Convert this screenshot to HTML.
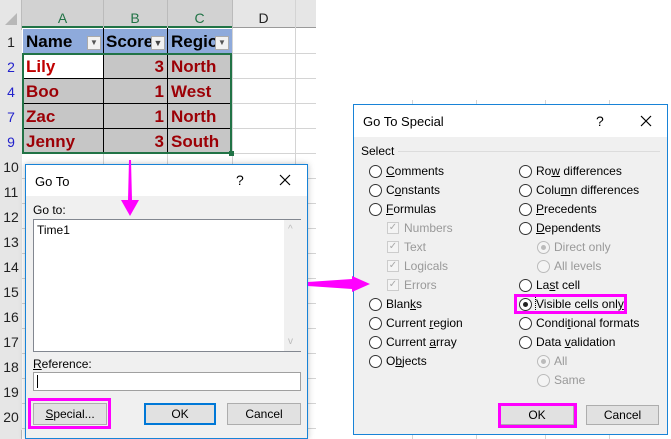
<!DOCTYPE html>
<html><head><style>
*{margin:0;padding:0;box-sizing:border-box}
body{width:671px;height:439px;position:relative;background:#fff;font-family:"Liberation Sans",sans-serif;overflow:hidden}
.a{position:absolute}
.hl{position:absolute;height:1px;background:#d4d4d4}
.vl{position:absolute;width:1px;background:#d4d4d4}
.rh{position:absolute;left:0;width:22px;text-align:center;font-size:14px;color:#222;background:#e6e6e6}
.ch{position:absolute;top:0;height:28px;line-height:36px;text-align:center;font-size:14px;color:#217346}
.cell{position:absolute;font-weight:bold;font-size:16px;line-height:25px;color:#9c0006}
.dlg{font-size:12px;color:#000}
.rad{position:absolute;width:13px;height:13px;border:1px solid #333;border-radius:50%;background:#fff}
.rad.dis{border-color:#bbb;background:#f4f4f4}
.lbl{position:absolute;font-size:12px;line-height:14px}
.chk{position:absolute;width:12px;height:12px;border:1px solid #ccc;background:#f4f4f4;color:#aaa;font-size:10px;line-height:10px;text-align:center}
.btn{position:absolute;border:1px solid #adadad;background:#e1e1e1;text-align:center;font-size:12px;line-height:20px}
u{text-decoration:underline}
</style></head><body>
<div class="a" style="left:0;top:0;width:316px;height:28px;background:#e6e6e6;border-bottom:1px solid #9a9a9a"></div>
<div class="a" style="left:0;top:0;width:22px;height:439px;background:#e6e6e6;border-right:1px solid #bcbcbc"></div>
<div class="a" style="left:22px;top:0;width:210px;height:28px;background:#d2d2d2;border-bottom:2px solid #217346"></div>
<div class="a" style="left:5px;top:13px;width:0;height:0;border-left:12px solid transparent;border-bottom:12px solid #b8b8b8"></div>
<div class="ch" style="left:22px;width:81px">A</div>
<div class="ch" style="left:103px;width:64px">B</div>
<div class="ch" style="left:167px;width:65px">C</div>
<div class="ch" style="left:232px;width:63px;color:#222">D</div>
<div class="vl" style="left:103px;top:0;height:28px;background:#bbb"></div>
<div class="vl" style="left:167px;top:0;height:28px;background:#bbb"></div>
<div class="vl" style="left:232px;top:0;height:28px;background:#bbb"></div>
<div class="vl" style="left:295px;top:0;height:439px"></div>
<div class="vl" style="left:232px;top:28px;height:411px"></div>
<div class="vl" style="left:103px;top:153px;height:286px"></div>
<div class="vl" style="left:167px;top:153px;height:286px"></div>
<div class="hl" style="left:0;top:53px;width:316px"></div>
<div class="hl" style="left:0;top:78px;width:316px"></div>
<div class="hl" style="left:0;top:103px;width:316px"></div>
<div class="hl" style="left:0;top:128px;width:316px"></div>
<div class="hl" style="left:0;top:153px;width:316px"></div>
<div class="hl" style="left:0;top:178px;width:316px"></div>
<div class="hl" style="left:0;top:203px;width:316px"></div>
<div class="hl" style="left:0;top:228px;width:316px"></div>
<div class="hl" style="left:0;top:253px;width:316px"></div>
<div class="hl" style="left:0;top:278px;width:316px"></div>
<div class="hl" style="left:0;top:303px;width:316px"></div>
<div class="hl" style="left:0;top:328px;width:316px"></div>
<div class="hl" style="left:0;top:353px;width:316px"></div>
<div class="hl" style="left:0;top:378px;width:316px"></div>
<div class="hl" style="left:0;top:403px;width:316px"></div>
<div class="hl" style="left:0;top:428px;width:316px"></div>
<div class="rh" style="top:30px;line-height:25px">1</div>
<div class="rh" style="top:55px;line-height:25px;color:#2222cc">2</div>
<div class="rh" style="top:80px;line-height:25px;color:#2222cc">4</div>
<div class="rh" style="top:105px;line-height:25px;color:#2222cc">7</div>
<div class="rh" style="top:130px;line-height:25px;color:#2222cc">9</div>
<div class="rh" style="top:155px;line-height:25px">10</div>
<div class="rh" style="top:180px;line-height:25px">11</div>
<div class="rh" style="top:205px;line-height:25px">12</div>
<div class="rh" style="top:230px;line-height:25px">13</div>
<div class="rh" style="top:255px;line-height:25px">14</div>
<div class="rh" style="top:280px;line-height:25px">15</div>
<div class="rh" style="top:305px;line-height:25px">16</div>
<div class="rh" style="top:330px;line-height:25px">17</div>
<div class="rh" style="top:355px;line-height:25px">18</div>
<div class="rh" style="top:380px;line-height:25px">19</div>
<div class="rh" style="top:405px;line-height:25px">20</div>
<div class="a" style="left:23px;top:29px;width:209px;height:24px;background:#8eaadb"></div>
<div class="a" style="left:23px;top:53px;width:209px;height:100px;background:#c6c6c6"></div>
<div class="a" style="left:23px;top:54px;width:80px;height:24px;background:#fff"></div>
<div class="a" style="left:103px;top:28px;width:1px;height:125px;background:#000"></div>
<div class="a" style="left:167px;top:28px;width:1px;height:125px;background:#000"></div>
<div class="a" style="left:22px;top:78px;width:210px;height:1px;background:#000"></div>
<div class="a" style="left:22px;top:103px;width:210px;height:1px;background:#000"></div>
<div class="a" style="left:22px;top:128px;width:210px;height:1px;background:#000"></div>
<div class="a" style="left:22px;top:53px;width:210px;height:101px;border:2px solid #217346"></div>
<div class="a" style="left:229px;top:151px;width:5px;height:5px;background:#217346"></div>
<div class="cell" style="left:26px;top:29px;color:#000;font-size:17px">Name</div>
<div class="cell" style="left:106px;top:29px;color:#000;font-size:17px">Score</div>
<div class="cell" style="left:171px;top:29px;color:#000;font-size:17px">Regio</div>
<div class="a" style="left:87px;top:36px;width:14px;height:14px;background:#f2f2f2;border:1px solid #aaa;font-size:8px;text-align:center;line-height:12px;color:#555">▼</div>
<div class="a" style="left:151px;top:36px;width:14px;height:14px;background:#f2f2f2;border:1px solid #aaa;font-size:9px;text-align:center;line-height:12px;color:#444">▼</div>
<div class="a" style="left:215px;top:36px;width:14px;height:14px;background:#f2f2f2;border:1px solid #aaa;font-size:8px;text-align:center;line-height:12px;color:#555">▼</div>
<div class="cell" style="left:26px;top:54px;color:#c00000;font-size:17px">Lily</div>
<div class="cell" style="left:26px;top:79px;font-size:17px">Boo</div>
<div class="cell" style="left:26px;top:104px;font-size:17px">Zac</div>
<div class="cell" style="left:26px;top:129px;font-size:17px">Jenny</div>
<div class="cell" style="left:103px;width:61px;text-align:right;top:54px;font-size:17px">3</div>
<div class="cell" style="left:103px;width:61px;text-align:right;top:79px;font-size:17px">1</div>
<div class="cell" style="left:103px;width:61px;text-align:right;top:104px;font-size:17px">1</div>
<div class="cell" style="left:103px;width:61px;text-align:right;top:129px;font-size:17px">3</div>
<div class="cell" style="left:171px;top:54px;font-size:17px">North</div>
<div class="cell" style="left:171px;top:79px;font-size:17px">West</div>
<div class="cell" style="left:171px;top:104px;font-size:17px">North</div>
<div class="cell" style="left:171px;top:129px;font-size:17px">South</div>

<div class="a dlg" style="left:25px;top:164px;width:283px;height:275px;background:#f0f0f0;border:1px solid #1883d7;box-shadow:0 0 6px rgba(0,0,0,.25)">
 <div class="a" style="left:0;top:0;width:281px;height:31px;background:#fff"></div>
 <div class="a" style="left:9px;top:9px;font-size:13px">Go To</div>
 <div class="a" style="left:210px;top:7px;font-size:14px">?</div>
 <svg class="a" style="left:253px;top:9px" width="12" height="12"><path d="M1 1L11 11M11 1L1 11" stroke="#000" stroke-width="1.2"/></svg>
 <div class="a" style="left:7px;top:38px">Go to:</div>
 <div class="a" style="left:7px;top:54px;width:268px;height:133px;background:#fff;border:1px solid #828790">
   <div class="a" style="left:3px;top:3px">Time1</div>
   <div class="a" style="left:250px;top:0;width:17px;height:131px;background:#f0f0f0"></div>
   <div class="a" style="left:254px;top:4px;color:#bbb;font-size:10px">^</div>
   <div class="a" style="left:254px;top:116px;color:#bbb;font-size:10px">v</div>
 </div>
 <div class="a" style="left:7px;top:192px"><u>R</u>eference:</div>
 <div class="a" style="left:7px;top:207px;width:268px;height:19px;background:#fff;border:1px solid #a0a0a0"><div class="a" style="left:3px;top:2px;width:1px;height:13px;background:#000"></div></div>
 <div class="btn" style="left:7px;top:238px;width:74px;height:22px"><u>S</u>pecial...</div>
 <div class="btn" style="left:118px;top:238px;width:72px;height:22px;border:2px solid #0078d7;line-height:18px">OK</div>
 <div class="btn" style="left:201px;top:238px;width:74px;height:22px">Cancel</div>
</div>
<div class="a" style="left:28px;top:398px;width:83px;height:31px;border:3px solid #ff00ff"></div>

<div class="a" style="left:351px;top:100px;width:320px;height:339px;background:#fff"></div>
<div class="vl" style="left:412px;top:100px;height:339px"></div>
<div class="vl" style="left:476px;top:100px;height:339px"></div>
<div class="vl" style="left:545px;top:100px;height:339px"></div>
<div class="vl" style="left:609px;top:100px;height:339px"></div>
<div class="a dlg" style="left:353px;top:104px;width:315px;height:331px;background:#f0f0f0;border:1px solid #1883d7">
 <div class="a" style="left:0;top:0;width:313px;height:32px;background:#fff"></div>
 <div class="a" style="left:9px;top:9px;font-size:13px">Go To Special</div>
 <div class="a" style="left:242px;top:8px;font-size:14px">?</div>
 <svg class="a" style="left:286px;top:10px" width="12" height="12"><path d="M1 1L11 11M11 1L1 11" stroke="#000" stroke-width="1.2"/></svg>
 <div class="a" style="left:7px;top:39px">Select</div>
 <div class="a" style="left:44px;top:46px;width:262px;height:1px;background:#dcdcdc"></div>
</div>
<div class="rad" style="left:369px;top:165px"></div><div class="lbl" style="left:386px;top:164px"><u>C</u>omments</div>
<div class="rad" style="left:369px;top:184px"></div><div class="lbl" style="left:386px;top:183px">C<u>o</u>nstants</div>
<div class="rad" style="left:369px;top:203px"></div><div class="lbl" style="left:386px;top:202px"><u>F</u>ormulas</div>
<div class="chk" style="left:387px;top:222px">✓</div><div class="lbl" style="left:404px;top:221px;color:#999">Numbers</div>
<div class="chk" style="left:387px;top:241px">✓</div><div class="lbl" style="left:404px;top:240px;color:#999">Text</div>
<div class="chk" style="left:387px;top:260px">✓</div><div class="lbl" style="left:404px;top:259px;color:#999">Logicals</div>
<div class="chk" style="left:387px;top:279px">✓</div><div class="lbl" style="left:404px;top:278px;color:#999">Errors</div>
<div class="rad" style="left:369px;top:298px"></div><div class="lbl" style="left:386px;top:297px">Blan<u>k</u>s</div>
<div class="rad" style="left:369px;top:317px"></div><div class="lbl" style="left:386px;top:316px">Current <u>r</u>egion</div>
<div class="rad" style="left:369px;top:336px"></div><div class="lbl" style="left:386px;top:335px">Current <u>a</u>rray</div>
<div class="rad" style="left:369px;top:355px"></div><div class="lbl" style="left:386px;top:354px">O<u>b</u>jects</div>

<div class="rad" style="left:519px;top:165px"></div><div class="lbl" style="left:536px;top:164px">Ro<u>w</u> differences</div>
<div class="rad" style="left:519px;top:184px"></div><div class="lbl" style="left:536px;top:183px">Colu<u>m</u>n differences</div>
<div class="rad" style="left:519px;top:203px"></div><div class="lbl" style="left:536px;top:202px"><u>P</u>recedents</div>
<div class="rad" style="left:519px;top:222px"></div><div class="lbl" style="left:536px;top:221px"><u>D</u>ependents</div>
<div class="rad dis" style="left:537px;top:241px"><div class="a" style="left:3px;top:3px;width:5px;height:5px;border-radius:50%;background:#bbb"></div></div><div class="lbl" style="left:554px;top:240px;color:#999">Direct only</div>
<div class="rad dis" style="left:537px;top:260px"></div><div class="lbl" style="left:554px;top:259px;color:#999">All levels</div>
<div class="rad" style="left:519px;top:279px"></div><div class="lbl" style="left:536px;top:278px">La<u>s</u>t cell</div>
<div class="rad" style="left:519px;top:298px"><div class="a" style="left:3px;top:3px;width:5px;height:5px;border-radius:50%;background:#222"></div></div><div class="lbl" style="left:536px;top:297px;outline:1px dotted #000">Visible cells onl<u>y</u></div>
<div class="rad" style="left:519px;top:317px"></div><div class="lbl" style="left:536px;top:316px">Condi<u>t</u>ional formats</div>
<div class="rad" style="left:519px;top:336px"></div><div class="lbl" style="left:536px;top:335px">Data <u>v</u>alidation</div>
<div class="rad dis" style="left:537px;top:355px"><div class="a" style="left:3px;top:3px;width:5px;height:5px;border-radius:50%;background:#bbb"></div></div><div class="lbl" style="left:554px;top:354px;color:#999">All</div>
<div class="rad dis" style="left:537px;top:374px"></div><div class="lbl" style="left:554px;top:373px;color:#999">Same</div>
<div class="a" style="left:514px;top:294px;width:113px;height:20px;border:3px solid #ff00ff"></div>
<div class="btn" style="left:500px;top:405px;width:74px;height:20px;line-height:18px">OK</div>
<div class="a" style="left:498px;top:403px;width:79px;height:25px;border:3px solid #ff00ff"></div>
<div class="btn" style="left:586px;top:405px;width:73px;height:20px;line-height:18px">Cancel</div>

<svg class="a" style="left:0;top:0" width="671" height="439">
<polygon points="129,160 131,160 132,200 139,200 130,216 121,200 128,200" fill="#ff00ff"/>
<polygon points="308,282 352,279 352,276 370,284 352,292 352,289 308,286" fill="#ff00ff"/>
</svg>
</body></html>
